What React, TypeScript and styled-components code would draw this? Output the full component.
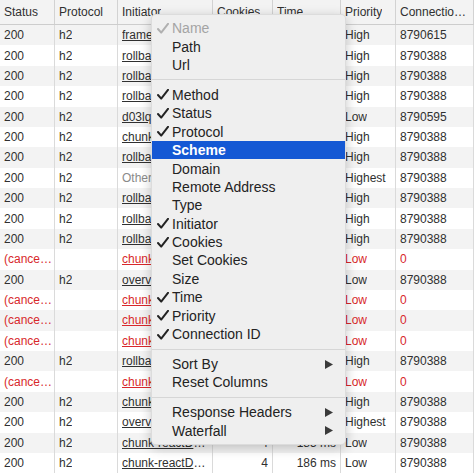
import React from "react";
import styled, { createGlobalStyle } from "styled-components";

const GlobalStyle = createGlobalStyle`
    html, body {
        margin: 0;
        padding: 0;
        background: #ffffff;
    }
    body {
        font-family: "Liberation Sans", Arial, sans-serif;
        overflow: hidden;
    }
`;

const COLS = "55px 63px 95px 60px 68px 55px 78px";

const SPage = styled.div`
    position: relative;
    width: 474px;
    height: 475px;
    overflow: hidden;
`;

const STable = styled.div`
    display: flex;
    flex-direction: column;
    font-size: 12px;
    color: #303030;
`;

const SHeader = styled.div`
    display: grid;
    grid-template-columns: ${COLS};
    height: 25px;
    background: #f3f3f3;
    border-bottom: 1px solid #cdcdcd;
    box-sizing: border-box;
`;

const SRow = styled.div<{ $odd: boolean }>`
    display: grid;
    grid-template-columns: ${COLS};
    height: 20.38px;
    background: ${(p) => (p.$odd ? "#f3f3f3" : "#ffffff")};
`;

const SCell = styled.div<{ $align?: "left" | "right"; $red?: boolean }>`
    display: flex;
    align-items: center;
    justify-content: ${(p) => (p.$align === "right" ? "flex-end" : "flex-start")};
    padding: ${(p) => (p.$align === "right" ? "0 4px 0 4px" : "0 1px 0 4px")};
    border-right: 1px solid #dadada;
    min-width: 0;
    color: ${(p) => (p.$red ? "#d8282b" : "inherit")};

    span {
        white-space: nowrap;
        overflow: hidden;
        text-overflow: ellipsis;
    }
`;

const SHeadCell = styled(SCell)`
    border-right-color: #d2d2d2;
`;

const SLink = styled.span<{ $red?: boolean }>`
    text-decoration: underline;
    color: ${(p) => (p.$red ? "#d8282b" : "#303030")};
`;

const SOther = styled.span`
    color: #8a8a8a;
`;

/* context menu */

const SMenu = styled.div`
    position: absolute;
    left: 151px;
    top: 14px;
    width: 195px;
    padding: 4px 0;
    box-sizing: border-box;
    background: #efefef;
    border-radius: 5px;
    border: 1px solid rgba(0, 0, 0, 0.08);
    box-shadow: 0 3px 12px rgba(0, 0, 0, 0.22);
    font-size: 14px;
    color: #232323;
`;

const SItem = styled.div<{ $active?: boolean; $disabled?: boolean }>`
    display: flex;
    align-items: center;
    height: 18.4px;
    padding: 0 12px 0 5px;
    background: ${(p) => (p.$active ? "#1458d4" : "transparent")};
    color: ${(p) => (p.$active ? "#ffffff" : p.$disabled ? "#a4a4a4" : "#232323")};
    font-weight: ${(p) => (p.$active ? "bold" : "normal")};

    .check {
        width: 15px;
        flex: none;
        display: flex;
        align-items: center;
    }

    .label {
        flex: 1;
        white-space: nowrap;
    }
`;

const SSeparator = styled.div`
    height: 11.6px;
    display: flex;
    align-items: center;

    &::after {
        content: "";
        flex: 1;
        height: 1px;
        background: #d6d6d6;
    }
`;

const Check: React.FC<{ color: string }> = ({ color }) => (
    <svg width="12" height="11" viewBox="0 0 12 11">
        <path d="M1 6 L4.2 9.6 L11 0.8" fill="none" stroke={color} strokeWidth="2" strokeLinecap="round" strokeLinejoin="round" />
    </svg>
);

const Arrow: React.FC = () => (
    <svg width="8" height="9" viewBox="0 0 8 9">
        <path d="M0 0 L8 4.5 L0 9 Z" fill="#3a3a3a" />
    </svg>
);

interface IRequest {
    status: string;
    protocol: string;
    initiator: string;
    other?: boolean;
    cookies: string;
    time: string;
    priority: string;
    conn: string;
    failed?: boolean;
}

const ok = (initiator: string, priority: string, conn = "8790388", cookies = "", time = ""): IRequest => ({
    status: "200",
    protocol: "h2",
    initiator,
    cookies,
    time,
    priority,
    conn,
});

const canceled = (initiator: string): IRequest => ({
    status: "(canceled)",
    protocol: "",
    initiator,
    cookies: "",
    time: "",
    priority: "Low",
    conn: "0",
    failed: true,
});

const requests: IRequest[] = [
    ok("frame.js:1", "High", "8790615"),
    ok("rollbar.min.js:1", "High"),
    ok("rollbar.min.js:1", "High"),
    ok("rollbar.min.js:1", "High"),
    ok("d03lqxw2v0y1.js", "Low", "8790595"),
    ok("chunk-vendors.js", "High"),
    ok("rollbar.min.js:1", "High"),
    { ...ok("Other", "Highest"), other: true },
    ok("rollbar.min.js:1", "High"),
    ok("rollbar.min.js:1", "High"),
    ok("rollbar.min.js:1", "High"),
    canceled("chunk-vendors.js"),
    ok("overview.js:1", "Low"),
    canceled("chunk-vendors.js"),
    canceled("chunk-vendors.js"),
    canceled("chunk-vendors.js"),
    ok("rollbar.min.js:1", "High"),
    canceled("chunk-vendors.js"),
    ok("chunk-vendors.js", "High"),
    ok("overview.js:1", "Highest"),
    ok("chunk-reactDom.js", "Low", "8790388", "4", "185 ms"),
    ok("chunk-reactDom.js", "Low", "8790388", "4", "186 ms"),
];

const headers = ["Status", "Protocol", "Initiator", "Cookies", "Time", "Priority", "Connection ID"];

type MenuEntry =
    | { kind: "sep" }
    | { kind: "item"; label: string; checked?: boolean; disabled?: boolean; active?: boolean; sub?: boolean };

const menu: MenuEntry[] = [
    { kind: "item", label: "Name", checked: true, disabled: true },
    { kind: "item", label: "Path" },
    { kind: "item", label: "Url" },
    { kind: "sep" },
    { kind: "item", label: "Method", checked: true },
    { kind: "item", label: "Status", checked: true },
    { kind: "item", label: "Protocol", checked: true },
    { kind: "item", label: "Scheme", active: true },
    { kind: "item", label: "Domain" },
    { kind: "item", label: "Remote Address" },
    { kind: "item", label: "Type" },
    { kind: "item", label: "Initiator", checked: true },
    { kind: "item", label: "Cookies", checked: true },
    { kind: "item", label: "Set Cookies" },
    { kind: "item", label: "Size" },
    { kind: "item", label: "Time", checked: true },
    { kind: "item", label: "Priority", checked: true },
    { kind: "item", label: "Connection ID", checked: true },
    { kind: "sep" },
    { kind: "item", label: "Sort By", sub: true },
    { kind: "item", label: "Reset Columns" },
    { kind: "sep" },
    { kind: "item", label: "Response Headers", sub: true },
    { kind: "item", label: "Waterfall", sub: true },
];

const App: React.FC = () => {
    return (
        <SPage>
            <GlobalStyle />
            <STable>
                <SHeader>
                    {headers.map((h) => (
                        <SHeadCell key={h}>
                            <span>{h}</span>
                        </SHeadCell>
                    ))}
                </SHeader>
                {requests.map((r, index) => (
                    <SRow key={index} $odd={index % 2 === 0}>
                        <SCell $red={r.failed}>
                            <span>{r.status}</span>
                        </SCell>
                        <SCell>
                            <span>{r.protocol}</span>
                        </SCell>
                        <SCell>
                            {r.other ? <SOther>{r.initiator}</SOther> : <SLink $red={r.failed}>{r.initiator}</SLink>}
                        </SCell>
                        <SCell $align="right">
                            <span>{r.cookies}</span>
                        </SCell>
                        <SCell $align="right">
                            <span>{r.time}</span>
                        </SCell>
                        <SCell $red={r.failed}>
                            <span>{r.priority}</span>
                        </SCell>
                        <SCell $red={r.failed}>
                            <span>{r.conn}</span>
                        </SCell>
                    </SRow>
                ))}
            </STable>

            <SMenu>
                {menu.map((m, index) =>
                    m.kind === "sep" ? (
                        <SSeparator key={index} />
                    ) : (
                        <SItem key={index} $active={m.active} $disabled={m.disabled}>
                            <span className="check">{m.checked && <Check color={m.disabled ? "#b0b0b0" : "#232323"} />}</span>
                            <span className="label">{m.label}</span>
                            {m.sub && <Arrow />}
                        </SItem>
                    )
                )}
            </SMenu>
        </SPage>
    );
};

export default App;
